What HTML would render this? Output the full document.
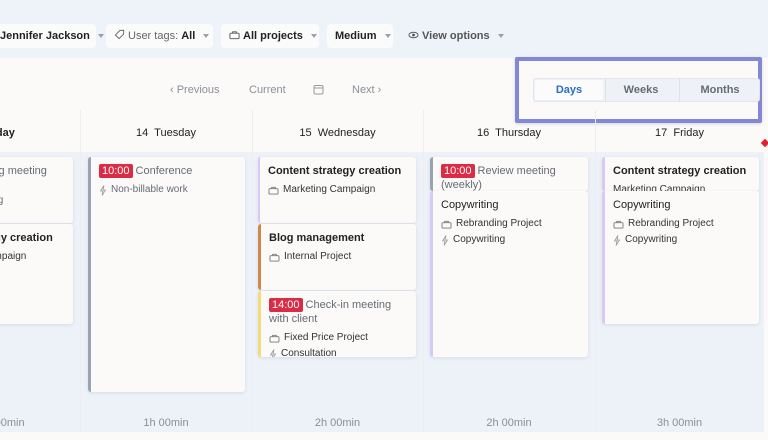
<!DOCTYPE html>
<html><head><meta charset="utf-8"><style>
*{margin:0;padding:0;box-sizing:border-box}
body{width:768px;height:440px;overflow:hidden;background:#fbfaf8;font-family:"Liberation Sans",sans-serif;position:relative;color:#2a2d33}
.a{position:absolute}
.top{left:0;top:0;width:768px;height:58px;background:#eef2f9}
.pill{top:24px;height:24px;background:#fbfbfc;border-radius:4px;font-size:11px;line-height:24px;padding:0 8px;white-space:nowrap;color:#222}
.pill b{font-weight:bold}
.car{display:inline-block;width:0;height:0;border-left:3px solid transparent;border-right:3px solid transparent;border-top:4px solid #9aa0aa;vertical-align:middle;margin-left:8px}
.nav{top:84px;font-size:11px;color:#8a8f98}
.dh{top:127px;font-size:11px;color:#222;text-align:center}
.colbg{top:152px;height:280px;background:#edf1f8}
.sep{top:110px;width:1px;height:322px;background:#eceef2}
.card{background:#fbfaf8;border-radius:3px;box-shadow:0 1px 3px rgba(60,70,90,.12);overflow:hidden;padding:7px 8px;font-size:11px;line-height:14px}
.t{font-weight:bold;color:#222;font-size:11px}
.g{color:#666b74}
.m{margin-top:5px;color:#333;font-size:10px;display:flex;align-items:center;gap:4px}
.tag{display:inline-block;background:#dc2b45;color:#fff;padding:0 3px;border-radius:2px;margin-right:3px;font-size:11px}
.tot{top:417px;font-size:11px;color:#8a8f98;text-align:center}
svg{flex:none}
</style></head><body>
<div class="a top"></div>
<div class="a pill" style="left:-8px;width:104px"><b>Jennifer Jackson</b><span class="car"></span></div>
<div class="a pill" style="left:106px;width:107px"><svg width="11" height="11" viewBox="0 0 12 12" style="vertical-align:-1px;margin-right:3px"><path d="M6.5 1.5h4v4l-5 5-4-4z" fill="none" stroke="#666" stroke-width="1"/></svg><span style="color:#666">User tags:</span> <b>All</b><span class="car"></span></div>
<div class="a pill" style="left:221px;width:98px"><svg width="11" height="10" viewBox="0 0 12 10" style="vertical-align:-1px;margin-right:3px"><rect x="1" y="3" width="10" height="6" rx="1" fill="none" stroke="#555"/><path d="M4 3V1.5h4V3" fill="none" stroke="#555"/></svg><b>All projects</b><span class="car"></span></div>
<div class="a pill" style="left:327px;width:66px"><b>Medium</b><span class="car"></span></div>
<div class="a" style="left:408px;top:24px;line-height:24px;font-size:11px;color:#555;white-space:nowrap;font-weight:bold"><svg width="11" height="8" viewBox="0 0 12 8" style="vertical-align:0;margin-right:3px"><ellipse cx="6" cy="4" rx="5" ry="3" fill="none" stroke="#555"/><circle cx="6" cy="4" r="1.5" fill="#555"/></svg>View options<span class="car"></span></div>

<div class="a nav" style="left:170px">‹ Previous</div>
<div class="a nav" style="left:249px">Current</div>
<svg class="a" style="left:313px;top:84px" width="11" height="11" viewBox="0 0 11 11"><rect x="1" y="1.5" width="9" height="8.5" rx="1.5" fill="none" stroke="#999"/><line x1="1" y1="4" x2="10" y2="4" stroke="#999"/></svg>
<div class="a nav" style="left:352px">Next ›</div>

<div class="a" style="left:515px;top:57px;width:247px;height:66px;border:4px solid #8288d6;border-radius:2px;background:#fbfaf8;box-shadow:0 1px 3px rgba(0,0,0,.15)"></div>
<div class="a" style="left:533px;top:78px;width:227px;height:24px;background:#eef1f6;border:1px solid #e3e6ec;border-radius:3px"></div>
<div class="a" style="left:535px;top:80px;width:68px;height:20px;background:#fbfbfc;border-radius:2px;font-size:11px;font-weight:bold;color:#2a6dc4;text-align:center;line-height:20px">Days</div>
<div class="a" style="left:605px;top:78px;width:1px;height:24px;background:#dde1e8"></div>
<div class="a" style="left:605px;top:80px;width:72px;font-size:11px;font-weight:bold;color:#666b74;text-align:center;line-height:20px">Weeks</div>
<div class="a" style="left:679px;top:78px;width:1px;height:24px;background:#dde1e8"></div>
<div class="a" style="left:680px;top:80px;width:80px;font-size:11px;font-weight:bold;color:#666b74;text-align:center;line-height:20px">Months</div>

<div class="a dh" style="left:-28px;width:60px;font-weight:bold">nday</div>
<div class="a dh" style="left:80px;width:172px">14&nbsp; Tuesday</div>
<div class="a dh" style="left:252px;width:171px">15&nbsp; Wednesday</div>
<div class="a dh" style="left:423px;width:172px">16&nbsp; Thursday</div>
<div class="a dh" style="left:595px;width:169px">17&nbsp; Friday</div>
<div class="a" style="left:762px;top:140px;width:6px;height:6px;background:#e0202e;transform:rotate(45deg)"></div>

<div class="a colbg" style="left:0;width:764px"></div>
<div class="a sep" style="left:80px"></div>
<div class="a sep" style="left:252px"></div>
<div class="a sep" style="left:423px"></div>
<div class="a sep" style="left:595px"></div>

<!-- col1 -->
<div class="a card" style="left:-20px;top:157px;width:93px;height:66px;padding-left:10px"><div class="g">ing meeting</div><div class="g" style="margin-top:16px;font-size:10px">ing</div></div>
<div class="a card" style="left:-20px;top:224px;width:93px;height:100px"><div class="t">egy creation</div><div class="m">ampaign</div></div>
<!-- col2 -->
<div class="a card" style="left:88px;top:157px;width:157px;height:235px;border-left:3px solid #9aa3b0"><div><span class="tag">10:00</span><span class="g">Conference</span></div><div class="m g" style="color:#666b74"><svg width="8" height="11" viewBox="0 0 8 11"><path d="M5 .5L1.5 6H4L3 10.5 6.5 5H4z" fill="none" stroke="#999" stroke-width=".8"/></svg>Non-billable work</div></div>
<!-- col3 -->
<div class="a card" style="left:258px;top:157px;width:158px;height:66px;border-left:2px solid #d8c9f5"><div class="t">Content strategy creation</div><div class="m"><svg width="11" height="9" viewBox="0 0 12 10"><rect x="1" y="3" width="10" height="6" rx="1" fill="none" stroke="#777"/><path d="M4 3V1.5h4V3" fill="none" stroke="#777"/></svg>Marketing Campaign</div></div>
<div class="a card" style="left:258px;top:224px;width:158px;height:66px;border-left:3px solid #d0884a"><div class="t">Blog management</div><div class="m"><svg width="11" height="9" viewBox="0 0 12 10"><rect x="1" y="3" width="10" height="6" rx="1" fill="none" stroke="#777"/><path d="M4 3V1.5h4V3" fill="none" stroke="#777"/></svg>Internal Project</div></div>
<div class="a card" style="left:258px;top:291px;width:158px;height:66px;border-left:3px solid #f3dc7a"><div><span class="tag">14:00</span><span class="g">Check-in meeting with client</span></div><div class="m g"><svg width="11" height="9" viewBox="0 0 12 10"><rect x="1" y="3" width="10" height="6" rx="1" fill="none" stroke="#777"/><path d="M4 3V1.5h4V3" fill="none" stroke="#777"/></svg>Fixed Price Project</div><div class="m g" style="margin-top:2px"><svg width="8" height="11" viewBox="0 0 8 11"><path d="M5 .5L1.5 6H4L3 10.5 6.5 5H4z" fill="none" stroke="#999" stroke-width=".8"/></svg>Consultation</div></div>
<!-- col4 -->
<div class="a card" style="left:430px;top:157px;width:158px;height:34px;border-left:3px solid #9aa3b0;padding-top:7px"><div><span class="tag">10:00</span><span class="g">Review meeting (weekly)</span></div></div>
<div class="a card" style="left:430px;top:191px;width:158px;height:166px;border-left:3px solid #d8c9f5"><div class="t" style="font-weight:normal;color:#222">Copywriting</div><div class="m"><svg width="11" height="9" viewBox="0 0 12 10"><rect x="1" y="3" width="10" height="6" rx="1" fill="none" stroke="#777"/><path d="M4 3V1.5h4V3" fill="none" stroke="#777"/></svg>Rebranding Project</div><div class="m" style="margin-top:2px"><svg width="8" height="11" viewBox="0 0 8 11"><path d="M5 .5L1.5 6H4L3 10.5 6.5 5H4z" fill="none" stroke="#999" stroke-width=".8"/></svg>Copywriting</div></div>
<!-- col5 -->
<div class="a card" style="left:602px;top:157px;width:157px;height:34px;border-left:3px solid #d8c9f5"><div class="t">Content strategy creation</div><div class="m">Marketing Campaign</div></div>
<div class="a card" style="left:602px;top:191px;width:157px;height:133px;border-left:3px solid #d8c9f5"><div class="t" style="font-weight:normal;color:#222">Copywriting</div><div class="m"><svg width="11" height="9" viewBox="0 0 12 10"><rect x="1" y="3" width="10" height="6" rx="1" fill="none" stroke="#777"/><path d="M4 3V1.5h4V3" fill="none" stroke="#777"/></svg>Rebranding Project</div><div class="m" style="margin-top:2px"><svg width="8" height="11" viewBox="0 0 8 11"><path d="M5 .5L1.5 6H4L3 10.5 6.5 5H4z" fill="none" stroke="#999" stroke-width=".8"/></svg>Copywriting</div></div>

<div class="a tot" style="left:-28px;width:60px">2h 00min</div>
<div class="a tot" style="left:80px;width:172px">1h 00min</div>
<div class="a tot" style="left:252px;width:171px">2h 00min</div>
<div class="a tot" style="left:423px;width:172px">2h 00min</div>
<div class="a tot" style="left:595px;width:169px">3h 00min</div>
</body></html>
